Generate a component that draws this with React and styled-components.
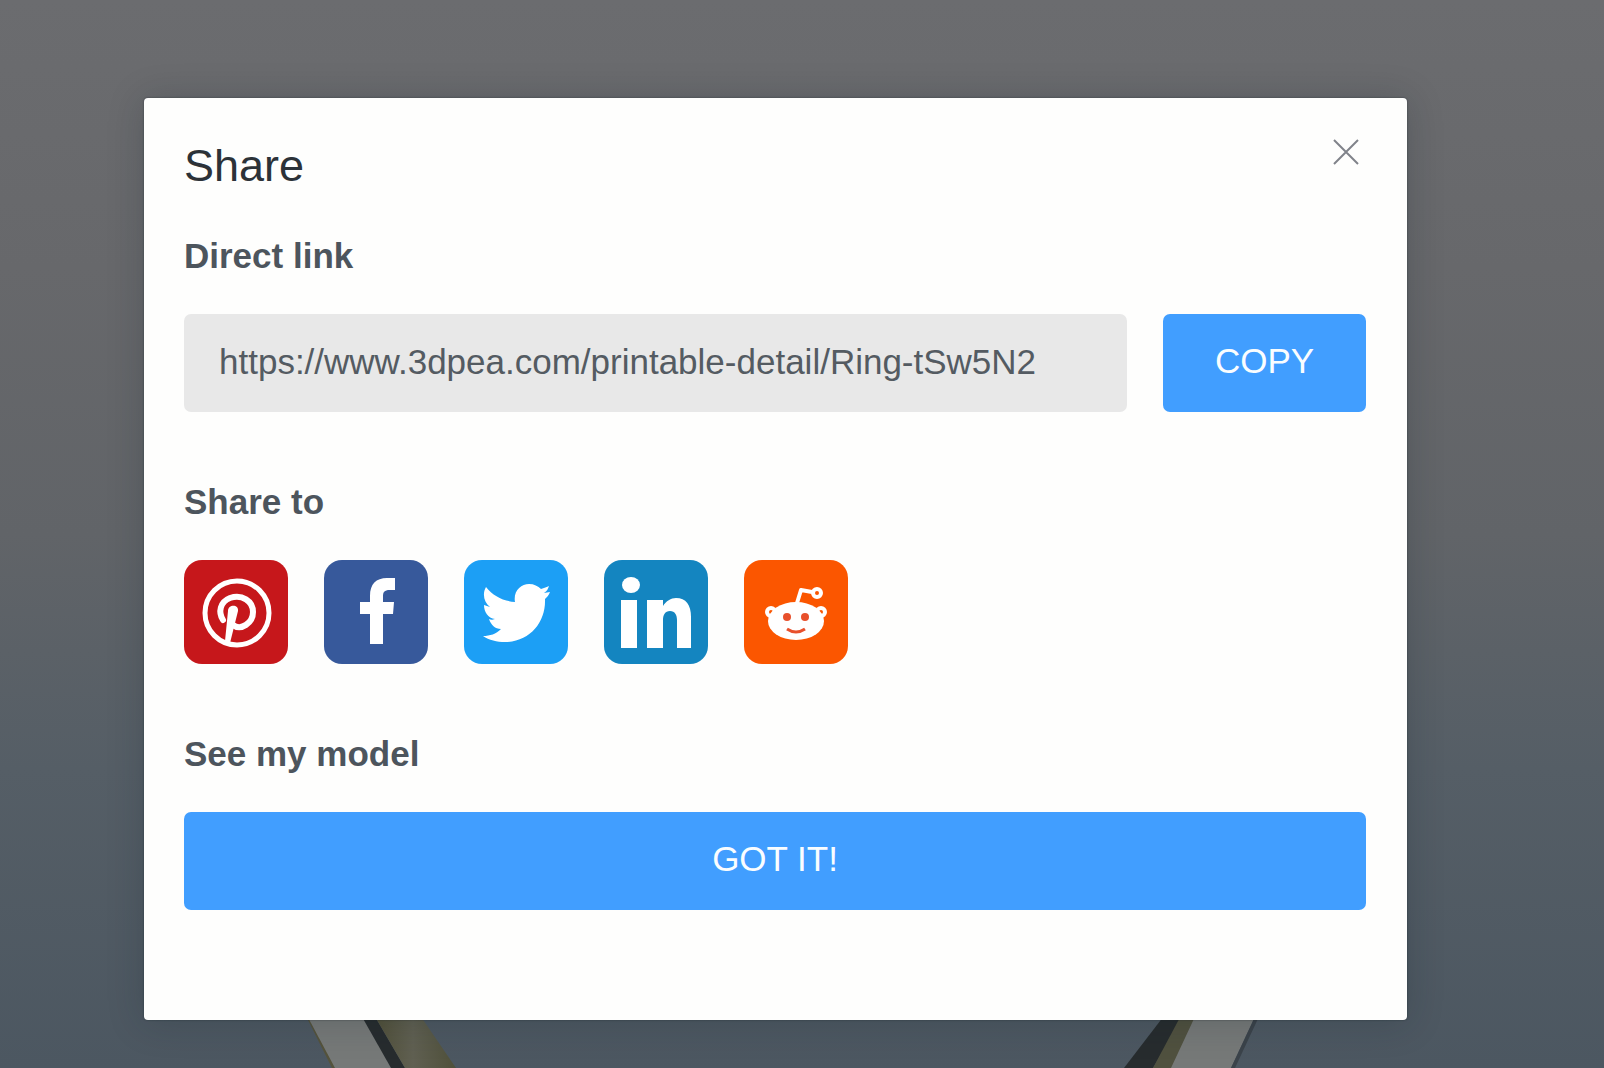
import React, { useRef } from "react"
import styled, { createGlobalStyle } from "styled-components"

const GlobalStyle = createGlobalStyle`
  * {
    box-sizing: border-box;
  }

  body {
    margin: 0;
    font-family: "Liberation Sans", Arial, sans-serif;
  }
`

const Backdrop = styled.div`
  position: relative;
  min-height: 100vh;
  padding: 98px 197px 48px 144px;
  overflow: hidden;
  background: linear-gradient(
    #6b6c6f 0%,
    #67686b 25%,
    #616468 50%,
    #555e66 72%,
    #4c5761 100%
  );
`

const Ring = styled.svg`
  position: absolute;
  left: 0;
  bottom: 0;
  width: 100%;
`

const Modal = styled.section`
  position: relative;
  padding: 44px 41px 110px 40px;
  background: #fefefd;
  border-radius: 4px;
  box-shadow: 0 2px 36px rgba(20, 32, 42, 0.22), 0 0 2px rgba(20, 32, 42, 0.6);
`

const Header = styled.header`
  display: flex;
  justify-content: space-between;
  align-items: flex-start;
  margin-bottom: 46px;
`

const Title = styled.h1`
  margin: 0;
  font-size: 45px;
  font-weight: 400;
  line-height: 48px;
  color: #2c3238;
`

const CloseButton = styled.button`
  display: flex;
  padding: 0;
  margin: -10px 0;
  border: none;
  background: transparent;
  color: #80838a;
  cursor: pointer;
`

const Section = styled.div`
  & + & {
    margin-top: 70px;
  }
`

const Label = styled.label`
  display: block;
  margin-bottom: 38px;
  font-size: 35px;
  font-weight: 700;
  line-height: 40px;
  color: #4d555d;
`

const LinkRow = styled.div`
  display: flex;
  gap: 36px;
`

const LinkInput = styled.input`
  flex: 1;
  min-width: 0;
  height: 98px;
  padding: 0 35px 2px;
  border: none;
  border-radius: 7px;
  background: #e8e8e8;
  color: #545b62;
  font-family: inherit;
  font-size: 35px;
`

const Button = styled.button`
  width: ${props => (props.$wide ? "100%" : "203px")};
  height: 98px;
  padding: 0 0 4px;
  border: none;
  border-radius: 7px;
  background: #419eff;
  color: #fafdff;
  font-family: inherit;
  font-size: 35px;
  cursor: pointer;
`

const SocialList = styled.div`
  display: flex;
  gap: 36px;
`

const SocialLink = styled.a`
  display: block;
  width: 104px;
  height: 104px;
  border-radius: 18px;
  background: ${props => props.$color};

  svg {
    display: block;
  }
`

const PinterestIcon = () => (
  <g fill="none" stroke="#fff" strokeLinecap="round">
    <circle cx="53" cy="53" r="32" strokeWidth="5" />
    <path
      d="M39 60C34 52 36 42 46 38C58 34 69 41 69 52C69 63 57 71 49 65"
      strokeWidth="6"
    />
    <path d="M44 51C44 44 55 44 54 51L46 83L41 81Z" fill="#fff" stroke="none" />
  </g>
)

const FacebookIcon = () => (
  <path
    fill="#fff"
    d="M46 84V54H36V42H46V36C46 24 52 18 63 18H71V30H66C60 30 59 32 59 37V42H70L69 54H59V84Z"
  />
)

const TwitterIcon = () => (
  <path
    fill="#fff"
    d="M22 27C29 36 39 41 51 42C49 31 57 24 65 24C70 24 74 26 77 29C80 28 83 27 85 26C84 29 83 31 80 33C82 33 84 32 86 32C85 35 83 37 81 39C82 62 66 82 41 82C33 82 25 80 19 76C26 76 32 74 37 69C31 69 27 65 25 59C27 60 28 60 31 59C24 58 20 52 20 45C22 46 24 46 26 47C20 42 18 34 22 27Z"
  />
)

const LinkedinIcon = () => (
  <g fill="#fff">
    <ellipse cx="27" cy="25" rx="9" ry="8" />
    <path d="M17 40H33V88H17Z" />
    <path d="M43 40H59V46C62 41 67 38 72 38C82 38 87 45 87 57V88H73V60C73 55 71 51 66 51C61 51 59 55 59 60V88H43Z" />
  </g>
)

const RedditIcon = () => (
  <g>
    <g fill="#fb5600" stroke="#fff" strokeWidth="4">
      <circle cx="27" cy="52" r="4" />
      <circle cx="77" cy="52" r="4" />
      <circle cx="73" cy="33" r="4" />
      <path d="M53 43L57 30L68 32" fill="none" strokeLinejoin="round" />
    </g>
    <ellipse cx="52" cy="61" rx="28" ry="19" fill="#fff" />
    <circle cx="43" cy="57" r="4" fill="#e8502c" />
    <circle cx="61" cy="57" r="4" fill="#e8502c" />
    <path d="M43 69Q52 75 61 69" fill="none" stroke="#e8502c" strokeWidth="3" />
  </g>
)

const networks = [
  { name: "Pinterest", color: "#c6171b", Icon: PinterestIcon },
  { name: "Facebook", color: "#37599b", Icon: FacebookIcon },
  { name: "Twitter", color: "#1c9ff5", Icon: TwitterIcon },
  { name: "LinkedIn", color: "#1485c0", Icon: LinkedinIcon },
  { name: "Reddit", color: "#fb5600", Icon: RedditIcon },
]

const RingModel = () => (
  <Ring viewBox="0 0 1604 60" aria-hidden="true">
    <defs>
      <linearGradient id="inner" x1="0" y1="0" x2="1" y2="0">
        <stop offset="0" stopColor="#4f4e35" />
        <stop offset="0.5" stopColor="#606052" />
        <stop offset="1" stopColor="#4f503a" />
      </linearGradient>
    </defs>
    <path d="M302 0L332 60H337L309 0Z" fill="#55533c" />
    <path d="M303 0H358L392 60H335Z" fill="#767978" />
    <path d="M357 0H370L405 60H391Z" fill="#272c2e" />
    <path d="M370 0H415L456 60H405Z" fill="url(#inner)" />
    <path d="M1170 0H1188L1153 60H1124Z" fill="#272c2e" />
    <path d="M1185 0H1200L1172 60H1153Z" fill="#50513f" />
    <path d="M1199 0H1259L1231 60H1171Z" fill="#767978" />
    <path d="M1259 0H1263L1235 60H1231Z" fill="#3b434a" />
  </Ring>
)

const App = () => {
  const linkRef = useRef(null)

  const copyLink = () => {
    linkRef.current.select()
    document.execCommand("copy")
  }

  return (
    <>
      <GlobalStyle />
      <Backdrop>
        <RingModel />
        <Modal role="dialog" aria-labelledby="share-title">
          <Header>
            <Title id="share-title">Share</Title>
            <CloseButton type="button" aria-label="Close">
              <svg width="40" height="40" viewBox="0 0 40 40">
                <path
                  d="M8 8L32 32M32 8L8 32"
                  stroke="currentColor"
                  strokeWidth="2"
                />
              </svg>
            </CloseButton>
          </Header>
          <Section>
            <Label htmlFor="link">Direct link</Label>
            <LinkRow>
              <LinkInput
                id="link"
                ref={linkRef}
                type="text"
                readOnly
                value="https://www.3dpea.com/printable-detail/Ring-tSw5N2"
              />
              <Button type="button" onClick={copyLink}>
                COPY
              </Button>
            </LinkRow>
          </Section>
          <Section>
            <Label as="h2">Share to</Label>
            <SocialList>
              {networks.map(({ name, color, Icon }) => (
                <SocialLink key={name} href="#" aria-label={name} $color={color}>
                  <svg width="104" height="104" viewBox="0 0 104 104">
                    <Icon />
                  </svg>
                </SocialLink>
              ))}
            </SocialList>
          </Section>
          <Section>
            <Label htmlFor="got-it">See my model</Label>
            <Button id="got-it" type="button" $wide>
              GOT IT!
            </Button>
          </Section>
        </Modal>
      </Backdrop>
    </>
  )
}

export default App
